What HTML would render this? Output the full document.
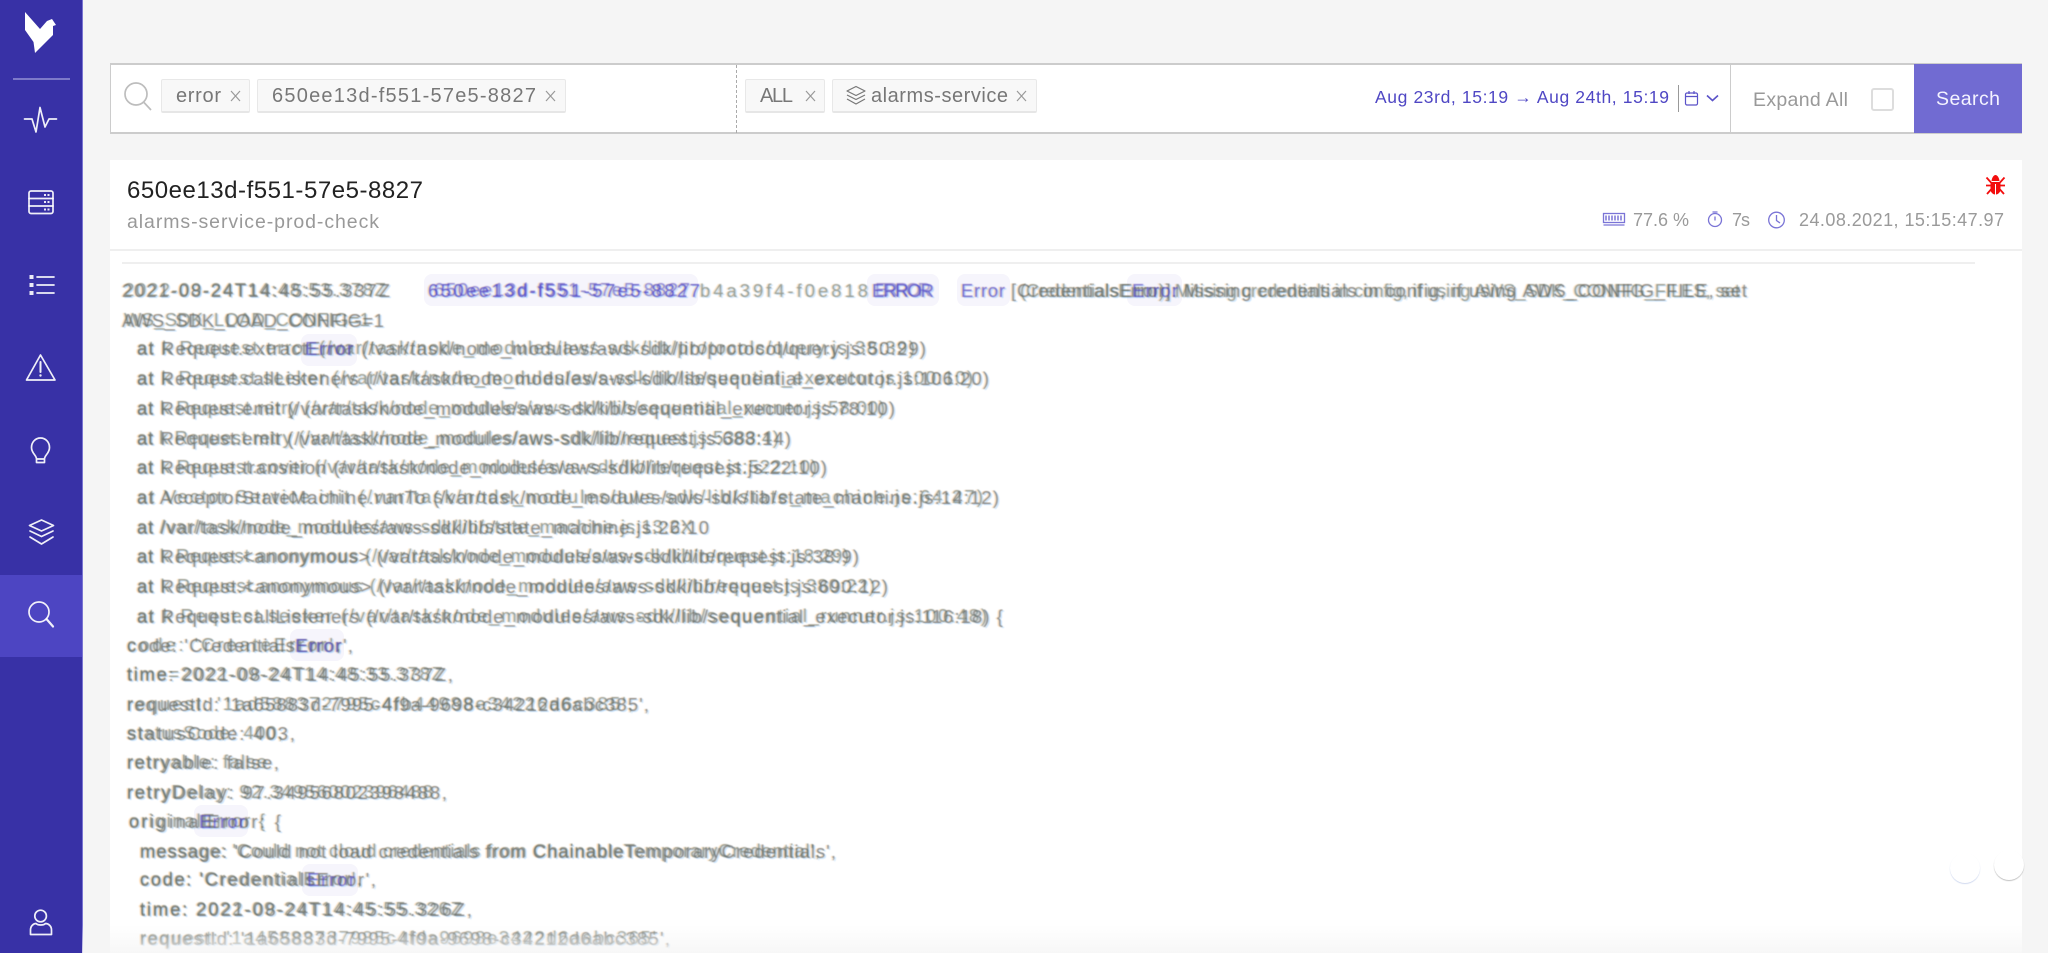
<!DOCTYPE html>
<html lang="en"><head><meta charset="utf-8"><title>Log search</title>
<style>
html,body{margin:0;padding:0;width:2048px;height:953px;overflow:hidden;background:#f5f5f5;font-family:"Liberation Sans",sans-serif}
.abs{position:absolute;box-sizing:border-box}
#side{left:0;top:0;width:83px;height:953px;background:#3831a6;border-right:1px solid #7a75d2}
#active{left:0;top:575px;width:82px;height:82px;background:#4d45c2}
#div{left:13px;top:78px;width:57px;height:2px;background:#7d79c9}
#bar{left:110px;top:63px;width:1912px;height:71px;background:#fff;border:2px solid #ccc;border-left-width:1.5px}
.tag{background:#f8f8f8;border:1px solid #e8e8e8;border-bottom:2px solid #e6e6e6;border-radius:2px;top:79px;height:34px}
#dash{left:736px;top:65px;height:68px;width:0;border-left:1px dashed #aaa}
#s1{left:1678px;top:85px;width:1px;height:27px;background:#999}
#s2{left:1730px;top:65px;width:1px;height:68px;background:#ccc}
#cb{left:1871px;top:88px;width:23px;height:23px;border:2px solid #ddd;border-radius:3px;background:#fff}
#btn{left:1914px;top:64px;width:108px;height:69px;background:#716bd2}
#card{left:110px;top:160px;width:1912px;height:793px;background:#fff}
#hr1{left:110px;top:249px;width:1912px;height:2px;background:#efefef}
#hr2{left:122px;top:262px;width:1853px;height:2px;background:#efefef}
.hl{background:#f6f5fc;border-radius:8px}
.circ{width:30px;height:30px;border-radius:50%;background:#fff}
#c1{left:1950px;top:853px;box-shadow:0 1px 1px rgba(150,170,220,.45)}
#c2{left:1994px;top:850px;box-shadow:0 1px 1px rgba(0,0,0,.25)}
#fade{left:82px;top:925px;width:1940px;height:28px;background:linear-gradient(rgba(245,245,245,0),rgba(245,245,245,.8))}
svg{position:absolute;left:0;top:0}
.t{font-family:"Liberation Sans",sans-serif}
.ln{font-size:18.500px;fill:#555}
.a{fill-opacity:.62}
.b{fill-opacity:.58;fill:#5f6a62}
.p{fill:#4a40cc}
</style></head><body>
<div class="abs" id="side"></div>
<div class="abs" id="active"></div>
<div class="abs" id="div"></div>
<div class="abs" id="bar"></div>
<div class="abs tag" style="left:161px;width:89px"></div>
<div class="abs tag" style="left:257px;width:309px"></div>
<div class="abs" id="dash"></div>
<div class="abs tag" style="left:745px;width:80px"></div>
<div class="abs tag" style="left:832px;width:205px"></div>
<div class="abs" id="s1"></div>
<div class="abs" id="s2"></div>
<div class="abs" id="cb"></div>
<div class="abs" id="btn"></div>
<div class="abs" id="card"></div>
<div class="abs" id="hr1"></div>
<div class="abs" id="hr2"></div>
<div class="abs hl" style="left:424px;top:274px;width:274px;height:32px"></div>
<div class="abs hl" style="left:867px;top:274px;width:72px;height:32px"></div>
<div class="abs hl" style="left:957px;top:274px;width:53px;height:32px"></div>
<div class="abs hl" style="left:1127px;top:274px;width:55px;height:32px"></div>
<div class="abs hl" style="left:301px;top:334px;width:56px;height:32px"></div>
<div class="abs hl" style="left:290px;top:629px;width:54px;height:32px"></div>
<div class="abs hl" style="left:194px;top:805px;width:54px;height:32px"></div>
<div class="abs hl" style="left:302px;top:864px;width:56px;height:32px"></div>
<div class="abs circ" id="c1"></div>
<div class="abs circ" id="c2"></div>

<svg width="2048" height="953" viewBox="0 0 2048 953" xmlns="http://www.w3.org/2000/svg">
<defs>
<filter id="ca" filterUnits="userSpaceOnUse" x="0" y="0" width="2048" height="953" color-interpolation-filters="sRGB">
<feOffset in="SourceAlpha" dx="-1.6" dy="0" result="o1"/>
<feFlood flood-color="#ffae50" flood-opacity=".55" result="f1"/>
<feComposite in="f1" in2="o1" operator="in" result="c1"/>
<feOffset in="SourceAlpha" dx="1.6" dy="0.8" result="o2"/>
<feFlood flood-color="#64b4ff" flood-opacity=".55" result="f2"/>
<feComposite in="f2" in2="o2" operator="in" result="c2"/>
<feMerge result="m"><feMergeNode in="c1"/><feMergeNode in="c2"/><feMergeNode in="SourceGraphic"/></feMerge>
<feGaussianBlur in="m" stdDeviation=".65"/>
</filter>
</defs>

<!-- sidebar icons -->
<polygon points="25,12 40,29 47,21 52,19 56,25 53,26 53,35 35,53 33.500,42 25,30" fill="#fff"/>
<g fill="none" stroke="#fff" stroke-opacity=".92" stroke-width="1.7" stroke-linejoin="round" stroke-linecap="round">
<path d="M24.500 119H32L36 132L40 107.500L45 127L49 119H56.500"/>
<rect x="29" y="191" width="24" height="22.500" rx="2"/>
<path d="M29 198.500H53M29 206H53"/>
<path d="M37 277H54M37 285H54M37 293H54"/>
<path d="M40.500 355L26.500 380H55L40.500 355Z"/>
<path d="M40.500 362V372" stroke-width="2"/>
<path d="M36.500 459C36.500 455 31.500 453.500 31.500 447.500C31.500 442 35.500 438 40.500 438C45.500 438 49.500 442 49.500 447.500C49.500 453.500 44.500 455 44.500 459ZM36.500 462.500H44.500V459M36.500 459V462.500"/>
<path d="M41.500 520L53.500 525.500L41.500 531L29.500 525.500ZM30 531L41.500 536.500L53 531M30 537L41.500 544L53 537"/>
<circle cx="39" cy="612" r="10"/>
<path d="M46.500 619L53 626.500" stroke-width="2.200"/>
<circle cx="40.600" cy="916" r="5.800"/>
<path d="M30.500 934.500V930C30.500 926 33.500 923.500 36 923.500C38 925.500 43.500 925.500 45.500 923.500C48.500 923.500 51.500 926 51.500 930V934.500Z"/>
</g>
<g fill="#fff" fill-opacity=".9">
<rect x="29.500" y="275" width="4" height="4"/><rect x="29.500" y="283" width="4" height="4"/><rect x="29.500" y="291" width="4" height="4"/>
<circle cx="40.500" cy="375.500" r="1.200"/>
<rect x="44" y="194" width="2" height="2"/><rect x="47.500" y="194" width="2" height="2"/>
<rect x="44" y="201" width="2" height="2"/><rect x="47.500" y="201" width="2" height="2"/>
<rect x="44" y="208.500" width="2" height="2"/><rect x="47.500" y="208.500" width="2" height="2"/>
</g>

<!-- search bar -->
<g fill="none" stroke="#bdbdbd" stroke-width="1.700">
<circle cx="136" cy="94" r="11"/><path d="M144 102.500L151 110"/>
</g>
<g class="t" font-size="20" fill="#777">
<text x="176" y="102" textLength="45" lengthAdjust="spacing">error</text>
<text x="272" y="102" textLength="264" lengthAdjust="spacing">650ee13d-f551-57e5-8827</text>
<text x="760" y="102" textLength="33" lengthAdjust="spacing">ALL</text>
<text x="871" y="102" textLength="137" lengthAdjust="spacing">alarms-service</text>
</g>
<g fill="none" stroke="#999" stroke-width="1.200">
<path d="M231 91L240 101M240 91L231 101"/>
<path d="M546 91L555 101M555 91L546 101"/>
<path d="M806 91L815 101M815 91L806 101"/>
<path d="M1017 91L1026 101M1026 91L1017 101"/>
</g>
<g fill="none" stroke="#777" stroke-width="1.200" stroke-linejoin="round">
<path d="M856 86.500L865 91L856 95.500L847 91ZM847 95L856 99.500L865 95M847 99L856 104L865 99"/>
</g>
<text class="t" x="1375" y="103" font-size="17.500" fill="#4f47c4" textLength="294" lengthAdjust="spacing">Aug 23rd, 15:19 → Aug 24th, 15:19</text>
<g fill="none" stroke="#5a52c8" stroke-width="1.200">
<rect x="1685.500" y="93" width="12" height="12" rx="1.500"/><path d="M1685.500 96.500H1697.500M1689 91V94M1694 91V94"/>
<path d="M1707 95.500L1712.500 100.500L1718 95.500" stroke-width="1.600"/>
</g>
<text class="t" x="1753" y="106" font-size="19.500" fill="#999" textLength="95" lengthAdjust="spacing">Expand All</text>
<text class="t" x="1936" y="105" font-size="19.500" fill="#f4f3ff" textLength="64" lengthAdjust="spacing">Search</text>

<!-- card header -->
<text class="t" x="127" y="198" font-size="24" fill="#222" textLength="296" lengthAdjust="spacing">650ee13d-f551-57e5-8827</text>
<text class="t" x="127" y="228" font-size="19.500" fill="#999" textLength="252" lengthAdjust="spacing">alarms-service-prod-check</text>
<g fill="#f30d0d">
<path d="M1991.500 181C1992 177 1994 175 1995.500 175C1997 175 1999 177 1999.500 181Z"/>
<path d="M1990.500 182H2000.500V190C2000.500 192 1998 194.500 1996 194.500V184H1995V194.500C1993 194.500 1990.500 192 1990.500 190Z"/>
</g>
<g fill="none" stroke="#f30d0d" stroke-width="1.800">
<path d="M1986.500 177.500L1991 182.500M2004.500 177.500L2000 182.500M1986 185.500H1991M2005 185.500H2000M1987 194L1991 189.500M2004 194L2000 189.500"/>
</g>
<g fill="none" stroke="#7a74d6" stroke-width="1.300">
<rect x="1603.500" y="213.500" width="21" height="9"/><path d="M1603.500 225H1624.500"/>
<path d="M1606 215.500V220.500M1609 215.500V220.500M1612 215.500V220.500M1615 215.500V220.500M1618 215.500V220.500M1621 215.500V220.500" stroke-width="1.500"/>
<circle cx="1715" cy="220" r="6.500"/><path d="M1712.500 212H1717.500M1715 216.500V220.500"/>
<circle cx="1776.500" cy="220" r="7.800"/><path d="M1776.500 215V220.500L1780 223"/>
</g>
<g class="t" font-size="18" fill="#9a9a9a">
<text x="1633" y="226" textLength="56" lengthAdjust="spacing">77.6 %</text>
<text x="1732" y="226" textLength="18" lengthAdjust="spacing">7s</text>
<text x="1799" y="226" textLength="205" lengthAdjust="spacing">24.08.2021, 15:15:47.97</text>
</g>

<!-- log output, double exposed -->
<g class="t ln" filter="url(#ca)">
<g class="a">
<text x="122" y="297" textLength="268" lengthAdjust="spacing">2021-08-24T14:45:55.337Z</text>
<text x="1011" y="297" textLength="736" lengthAdjust="spacing">[CredentialsError]: Missing credentials in config, if using AWS_CONFIG_FILE, set</text>
<text x="122" y="327" textLength="262" lengthAdjust="spacing">AWS_SDK_LOAD_CONFIG=1</text>
<text x="137" y="355" textLength="789" lengthAdjust="spacing">at Request.extractError (/var/task/node_modules/aws-sdk/lib/protocol/query.js:50:29)</text>
<text x="137" y="385" textLength="852" lengthAdjust="spacing">at Request.callListeners (/var/task/node_modules/aws-sdk/lib/sequential_executor.js:106:20)</text>
<text x="137" y="415" textLength="758" lengthAdjust="spacing">at Request.emit (/var/task/node_modules/aws-sdk/lib/sequential_executor.js:78:10)</text>
<text x="137" y="445" textLength="654" lengthAdjust="spacing">at Request.emit (/var/task/node_modules/aws-sdk/lib/request.js:688:14)</text>
<text x="137" y="474" textLength="690" lengthAdjust="spacing">at Request.transition (/var/task/node_modules/aws-sdk/lib/request.js:22:10)</text>
<text x="137" y="504" textLength="862" lengthAdjust="spacing">at AcceptorStateMachine.runTo (/var/task/node_modules/aws-sdk/lib/state_machine.js:14:12)</text>
<text x="137" y="534" textLength="572" lengthAdjust="spacing">at /var/task/node_modules/aws-sdk/lib/state_machine.js:26:10</text>
<text x="137" y="563" textLength="722" lengthAdjust="spacing">at Request.&lt;anonymous&gt; (/var/task/node_modules/aws-sdk/lib/request.js:38:9)</text>
<text x="137" y="593" textLength="751" lengthAdjust="spacing">at Request.&lt;anonymous&gt; (/var/task/node_modules/aws-sdk/lib/request.js:690:12)</text>
<text x="137" y="623" textLength="866" lengthAdjust="spacing">at Request.callListeners (/var/task/node_modules/aws-sdk/lib/sequential_executor.js:116:18) {</text>
<text x="127" y="652" textLength="226" lengthAdjust="spacing">code: 'CredentialsError',</text>
<text x="127" y="681" textLength="326" lengthAdjust="spacing">time: 2021-08-24T14:45:55.337Z,</text>
<text x="127" y="711" textLength="522" lengthAdjust="spacing">requestId: '1a65883d-7995-4f9a-9698-c34212d6abc385',</text>
<text x="127" y="740" textLength="168" lengthAdjust="spacing">statusCode: 403,</text>
<text x="127" y="769" textLength="152" lengthAdjust="spacing">retryable: false,</text>
<text x="127" y="799" textLength="320" lengthAdjust="spacing">retryDelay: 97.34956802398488,</text>
<text x="129" y="828" textLength="152" lengthAdjust="spacing">originalError: {</text>
<text x="140" y="858" textLength="696" lengthAdjust="spacing">message: 'Could not load credentials from ChainableTemporaryCredentials',</text>
<text x="140" y="886" textLength="236" lengthAdjust="spacing">code: 'CredentialsError',</text>
<text x="140" y="916" textLength="332" lengthAdjust="spacing">time: 2021-08-24T14:45:55.326Z,</text>
<text x="140" y="945" textLength="530" lengthAdjust="spacing">requestId: '1a65883d-7995-4f9a-9698-c34212d6abc385',</text>
</g>
<g class="b">
<text x="124" y="296" textLength="262" lengthAdjust="spacing">2022-09-24T14:48:53.378Z</text>
<text x="700" y="297" textLength="168" lengthAdjust="spacing">b4a39f4-f0e818</text>
<text x="1020" y="297" textLength="720" lengthAdjust="spacing">(CredentialsError); Missing credentials in config, if using AWS_SDK_CONFIG_FILES, set</text>
<text x="124" y="326" textLength="246" lengthAdjust="spacing">WS_SDK_LOAD_CONFIG=1</text>
<text x="137" y="354" textLength="778" lengthAdjust="spacing">at k Request.error (/var/task/node_modules/aws-sdk/lib/protocols/query.js:38:39)</text>
<text x="137" y="384" textLength="836" lengthAdjust="spacing">at k Request.seeker (/var/task/node_modules/aws-sdk/lib/sequential_executor.js:100:10)</text>
<text x="137" y="414" textLength="748" lengthAdjust="spacing">at k Request.retry (/var/task/node_modules/aws-sdk/lib/sequential_runner.js:58:00)</text>
<text x="137" y="444" textLength="642" lengthAdjust="spacing">at k Request.retry (/var/task/node_modules/aws-sdk/lib/request.js:5383:4)</text>
<text x="137" y="473" textLength="680" lengthAdjust="spacing">at k Request.cover (/var/task/node_modules/aws-sdk/lib/request.js:522:10)</text>
<text x="137" y="503" textLength="846" lengthAdjust="spacing">at Vector.Service.init (/var/task/node_modules/aws-sdk/lib/state_machine.js:64:27)</text>
<text x="137" y="533" textLength="556" lengthAdjust="spacing">at /var/task/node_modules/aws-sdk/lib/state_machine.js:13:2X</text>
<text x="137" y="562" textLength="712" lengthAdjust="spacing">at k Request.anonymous (/var/task/node_modules/aws-sdk/lib/request.js:18:29)</text>
<text x="137" y="592" textLength="738" lengthAdjust="spacing">at k Request.anonymous (/var/task/node_modules/aws-sdk/lib/request.js:380:22)</text>
<text x="137" y="622" textLength="850" lengthAdjust="spacing">at k Request.seeker (/var/task/node_modules/aws-sdk/lib/sequential_runner.js:100:48)</text>
<text x="127" y="651" textLength="214" lengthAdjust="spacing">code: 'CreateError',</text>
<text x="127" y="680" textLength="316" lengthAdjust="spacing">time=2022-09-24T14:48:33.378Z</text>
<text x="127" y="710" textLength="506" lengthAdjust="spacing">request: '1ad588372795c4fb44988e34226a6c385',</text>
<text x="127" y="739" textLength="156" lengthAdjust="spacing">statusSode: 400,</text>
<text x="127" y="768" textLength="140" lengthAdjust="spacing">retryable: false</text>
<text x="127" y="798" textLength="306" lengthAdjust="spacing">retryDelay: 92.34956002396488</text>
<text x="129" y="827" textLength="136" lengthAdjust="spacing">originalError {</text>
<text x="140" y="857" textLength="680" lengthAdjust="spacing">message: 'Could not cloud credentials from ChainableTemporaryCredential',</text>
<text x="140" y="885" textLength="222" lengthAdjust="spacing">code: 'CredentialError',</text>
<text x="140" y="915" textLength="322" lengthAdjust="spacing">time: 2022-09-24T14:45:55.326Z</text>
<text x="140" y="944" textLength="516" lengthAdjust="spacing">request: '1a45883737985c4fda9698e3422d6aabc365'</text>
</g>
<g class="p">
<text x="428" y="297" textLength="272" lengthAdjust="spacing" fill-opacity=".75">650ee13d-f551-57e5-8827</text>
<text x="434" y="296" textLength="256" lengthAdjust="spacing" fill-opacity=".55">650ee13d-f551-57e5-8827</text>
<text x="872" y="297" textLength="62" lengthAdjust="spacing" fill-opacity=".7">ERROR</text>
<text x="875" y="296" textLength="56" lengthAdjust="spacing" fill-opacity=".45">ERROR</text>
<text x="961" y="297" textLength="44" lengthAdjust="spacing" fill-opacity=".7">Error</text>
<text x="1132" y="297" textLength="46" lengthAdjust="spacing" fill-opacity=".65">Error</text>
<text x="305" y="355" textLength="48" lengthAdjust="spacing" fill-opacity=".65">Error</text>
<text x="295" y="652" textLength="46" lengthAdjust="spacing" fill-opacity=".65">Error</text>
<text x="199" y="828" textLength="46" lengthAdjust="spacing" fill-opacity=".65">Error</text>
<text x="307" y="886" textLength="48" lengthAdjust="spacing" fill-opacity=".65">Error</text>
</g>
</g>
</svg>
<div class="abs" id="fade"></div>
</body></html>
